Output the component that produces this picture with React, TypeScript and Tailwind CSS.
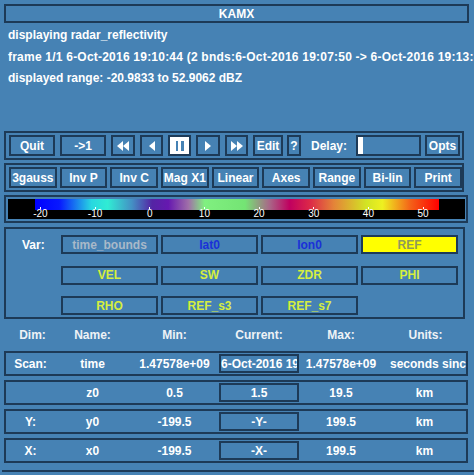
import React from 'react';

const line = 'border-2 border-[#1d3a57]';

const Btn = ({ w, children, className = '' }: { w: string; children: React.ReactNode; className?: string }) => (
  <div className={`${line} ${w} h-[21px] flex items-center justify-center shrink-0 ${className}`}>{children}</div>
);

const Tri = ({ dir, double }: { dir: 'l' | 'r'; double?: boolean }) => {
  const one = dir === 'l' ? '6,0 0,5 6,10' : '0,0 6,5 0,10';
  const two = dir === 'l' ? '12,0 6,5 12,10' : '6,0 12,5 6,10';
  return (
    <svg width={double ? 12 : 6} height="10" viewBox={double ? '0 0 12 10' : '0 0 6 10'}>
      <polygon points={one} fill="#fff" />
      {double && <polygon points={two} fill="#fff" />}
    </svg>
  );
};

const ticks = [-20, -10, 0, 10, 20, 30, 40, 50];
const tickX = (v: number) => 27 + ((v + 20.9833) / 73.8895) * 404;

const vars = [
  { t: 'time_bounds', c: 'text-[#a9b9c9]' },
  { t: 'lat0', c: 'text-[#1a30d8]' },
  { t: 'lon0', c: 'text-[#1a30d8]' },
  { t: 'REF', c: 'text-[#8e9a5c] bg-[#ffff00]' },
  { t: 'VEL', c: 'text-[#d6ee3e]' },
  { t: 'SW', c: 'text-[#d6ee3e]' },
  { t: 'ZDR', c: 'text-[#d6ee3e]' },
  { t: 'PHI', c: 'text-[#d6ee3e]' },
  { t: 'RHO', c: 'text-[#d6ee3e]' },
  { t: 'REF_s3', c: 'text-[#d6ee3e]' },
  { t: 'REF_s7', c: 'text-[#d6ee3e]' },
];

const dims = [
  { dim: 'Scan:', name: 'time', min: '1.47578e+09', cur: '6-Oct-2016 19:10:44', max: '1.47578e+09', units: 'seconds since 1970-01-01 00:00:00 UTC' },
  { dim: '', name: 'z0', min: '0.5', cur: '1.5', max: '19.5', units: 'km' },
  { dim: 'Y:', name: 'y0', min: '-199.5', cur: '-Y-', max: '199.5', units: 'km' },
  { dim: 'X:', name: 'x0', min: '-199.5', cur: '-X-', max: '199.5', units: 'km' },
];

const cols = 'grid grid-cols-[49px_75px_89px_80px_84px_1fr] items-center';

export default function App() {
  return (
    <div
      className="w-[474px] h-[475px] bg-[#4682b4] overflow-hidden text-white font-bold text-[12px]"
      style={{ fontFamily: '"Liberation Sans", Arial, sans-serif' }}
    >
      {/* title */}
      <div className={`${line} ml-[4px] mt-[4px] w-[465px] h-[19px] flex items-center justify-center`}>KAMX</div>

      {/* info lines */}
      <div className="h-[108px] pt-[2px] pl-[8px] leading-[21.5px] whitespace-nowrap overflow-hidden">
        <div>displaying radar_reflectivity</div>
        <div className="tracking-[0.22px]">frame 1/1 6-Oct-2016 19:10:44 (2 bnds:6-Oct-2016 19:07:50 -&gt; 6-Oct-2016 19:13:37)</div>
        <div>displayed range: -20.9833 to 52.9062 dBZ</div>
      </div>

      {/* playback row */}
      <div className={`${line} ml-[4px] w-[460px] h-[29px] flex items-center pl-[3px] gap-[5px]`}>
        <Btn w="w-[46px]">Quit</Btn>
        <Btn w="w-[46px]">-&gt;1</Btn>
        <Btn w="w-[24px]"><Tri dir="l" double /></Btn>
        <Btn w="w-[23px]"><Tri dir="l" /></Btn>
        <Btn w="w-[23px]" className="bg-white gap-[3px]">
          <span className="w-[2.5px] h-[10px] bg-[#4682b4]" />
          <span className="w-[2.5px] h-[10px] bg-[#4682b4]" />
        </Btn>
        <Btn w="w-[24px]"><Tri dir="r" /></Btn>
        <Btn w="w-[23px]"><Tri dir="r" double /></Btn>
        <Btn w="w-[30px]">Edit</Btn>
        <Btn w="w-[14px]" className="-ml-[1px]">?</Btn>
        <span className="ml-[5px] w-[40px]">Delay:</span>
        <div className={`${line} w-[65px] h-[21px] shrink-0 flex`}>
          <span className="w-[5px] h-full bg-white" />
        </div>
        <Btn w="w-[35px]" className="-ml-[1px]">Opts</Btn>
      </div>

      {/* display options row */}
      <div className={`${line} ml-[4px] mt-[3px] w-[460px] h-[29px] flex items-center pl-[3px] gap-[3px]`}>
        {['3gauss', 'Inv P', 'Inv C', 'Mag X1', 'Linear', 'Axes', 'Range', 'Bi-lin', 'Print'].map((b) => (
          <div key={b} className={`${line} flex-1 h-[21px] flex items-center justify-center whitespace-nowrap`}>{b}</div>
        ))}
      </div>

      {/* colour bar */}
      <div className={`${line} ml-[4px] mt-[3px] w-[464px] h-[28px] p-[2px]`}>
        <div className="relative w-[457px] h-[20px] bg-black">
          <div
            className="ml-[27px] w-[404px] h-[11px]"
            style={{
              background:
                'linear-gradient(to right, #0000ff 0%, #0818ff 6%, #28d8e0 14%, #30ecd4 18%, #4490c4 24%, #5424a4 29%, #6618b0 33%, #a070a8 38%, #80f080 42%, #74e474 52%, #a86888 58%, #c00060 63%, #dc2848 68%, #e48438 74%, #d2e424 82%, #eef020 86%, #f46018 93%, #ff0000 100%)',
            }}
          />
          {ticks.map((v) => (
            <div key={v} className="absolute top-0 h-full" style={{ left: tickX(v) }}>
              <span className="absolute top-[8px] -left-[0.5px] w-[1px] h-[2px] bg-white" />
              <span className="absolute top-[10px] -translate-x-1/2 text-[10px] font-normal leading-[10px] whitespace-nowrap">
                {v}
              </span>
            </div>
          ))}
        </div>
      </div>

      {/* variables */}
      <div className={`${line} ml-[4px] mt-[4px] w-[461px] h-[92px] pt-[6px] flex`}>
        <div className="w-[55px] pl-[16px] h-[19px] flex items-center shrink-0">Var:</div>
        <div className="grid grid-cols-[repeat(4,97px)] gap-x-[3px] gap-y-[10px]">
          {vars.map((v) => (
            <div key={v.t} className={`${line} h-[19px] flex items-center justify-center ${v.c}`}>{v.t}</div>
          ))}
        </div>
      </div>

      {/* dimensions header */}
      <div className={`${cols} h-[32px] px-[6px] text-[#eef2f6]`}>
        {['Dim:', 'Name:', 'Min:', 'Current:', 'Max:', 'Units:'].map((h, i) => (
          <div key={h} className={`text-center ${i === 0 ? 'pl-[4px]' : ''}`}>{h}</div>
        ))}
      </div>

      {/* dimension rows */}
      <div className="flex flex-col gap-[4px]">
        {dims.map((d) => (
          <div key={d.name} className={`${line} ${cols} ml-[4px] w-[464px] h-[25px] overflow-hidden whitespace-nowrap`}>
            <div className="text-center">{d.dim}</div>
            <div className="text-center">{d.name}</div>
            <div className="text-center">{d.min}</div>
            <div className={`${line} h-[19px] flex items-center overflow-hidden`}>
              <span className={`block w-full overflow-hidden ${d.cur.length > 10 ? 'text-left' : 'text-center'}`}>{d.cur}</span>
            </div>
            <div className="text-center">{d.max}</div>
            <div className={`overflow-hidden ${d.units.length > 10 ? 'text-left pl-[7px]' : 'text-center'}`}>{d.units}</div>
          </div>
        ))}
      </div>

      <div className="ml-[2px] mt-[7px] border-t-2 border-[#1d3a57]" />
    </div>
  );
}
